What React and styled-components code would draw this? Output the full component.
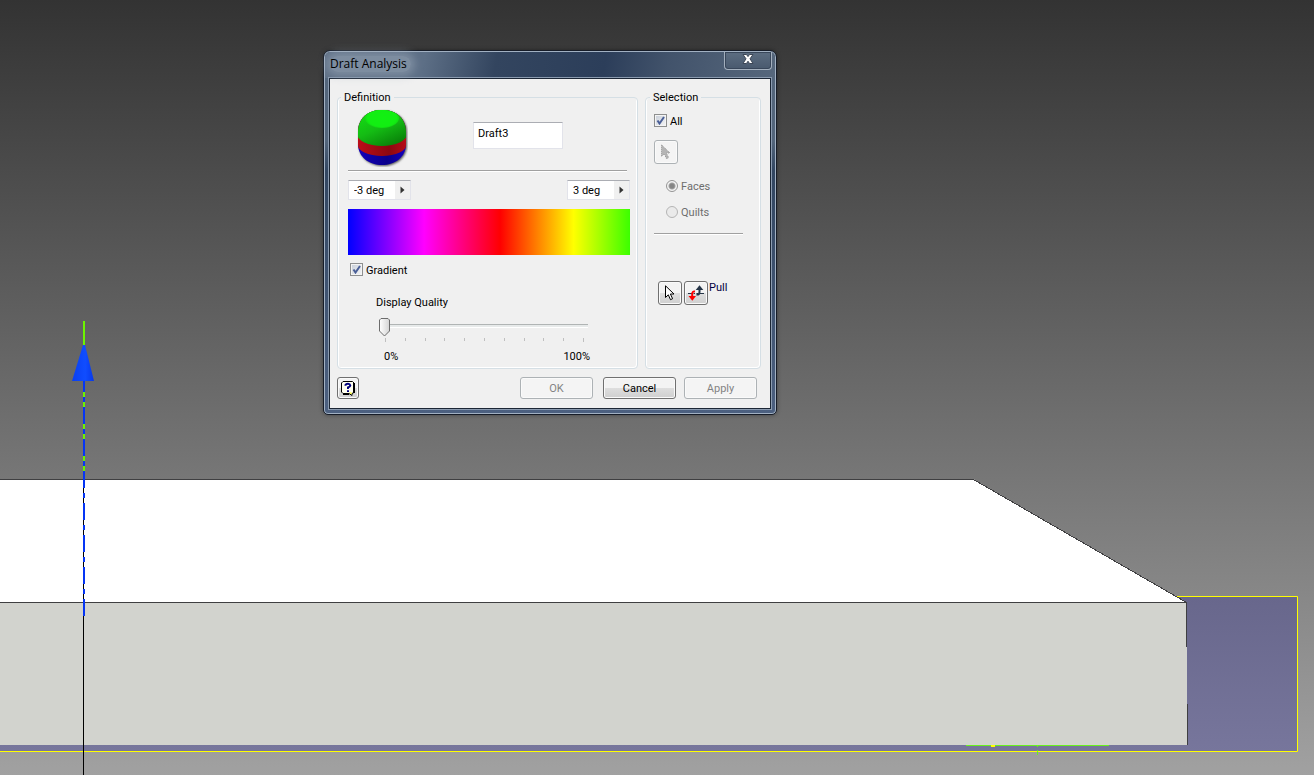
import React, { useState } from "react";
import styled, { createGlobalStyle } from "styled-components";

const uiFont = `"Tahoma", "Roboto", "Liberation Sans", sans-serif`;

const svgUrl = (w, h, body) =>
  `url("data:image/svg+xml,${encodeURIComponent(
    `<svg xmlns='http://www.w3.org/2000/svg' width='${w}' height='${h}' viewBox='0 0 ${w} ${h}'>${body}</svg>`
  )}")`;

const checkGlyph = svgUrl(
  11,
  11,
  `<path d='M2.5 5.5 L4.5 8.5 L9 2' fill='none' stroke='#4a5f97' stroke-width='2'/>`
);
const thumbGlyph = svgUrl(
  11,
  19,
  `<defs><linearGradient id='g'><stop offset='0' stop-color='#fff'/><stop offset='1' stop-color='#d4d4d4'/></linearGradient></defs><path d='M2 .5 H9 L10.5 2 V13 L5.5 18 L.5 13 V2 Z' fill='url(#g)' stroke='#6c6c6c'/>`
);

const GlobalStyle = createGlobalStyle`
  *, *::before, *::after { box-sizing: border-box; }
  body { margin: 0; background: #9f9f9f; font: 11px/16px ${uiFont}; color: #000; }
  button, input { font: inherit; color: inherit; }
`;

const Viewport = styled.main`
  position: relative;
  min-height: 100vh;
  overflow: hidden;
  background: linear-gradient(#333333, #a1a1a1);
`;

const Scene = styled.svg`
  display: block;
  width: 100%;
  height: 100vh;
`;

const Dialog = styled.section`
  position: absolute;
  left: 323px;
  top: 50px;
  width: 454px;
  padding: 0 5px 5px;
  border: 1px solid #161c28;
  border-radius: 7px 7px 5px 5px;
  background: linear-gradient(#53657b 0, #53657b 90px, #324661 120px, #4c6080 100%);
  box-shadow: inset 0 0 0 1px #a1b0c2, 0 0 4px rgba(0, 0, 0, 0.4);
`;

const TitleBar = styled.header`
  display: flex;
  justify-content: space-between;
  height: 26px;
  margin: 1px -4px 0;
  padding: 0 3px 0 5px;
  border-radius: 5px 5px 0 0;
  background: linear-gradient(100deg, #5f7086 0, #5d6f86 22%, #33455f 38%, #2c3e5a 62%, #42536b 76%, #56677c 100%);
`;

const Title = styled.h1`
  margin: 4px 0 0;
  padding: 0 4px 0 0;
  height: 16px;
  font: 12px/16px "Segoe UI", "Open Sans", sans-serif;
  color: #000;
  border-radius: 8px;
  background: rgba(165, 178, 193, 0.45);
  box-shadow: 0 0 8px 4px rgba(165, 178, 193, 0.45);
`;

const CloseButton = styled.button`
  display: flex;
  justify-content: center;
  width: 48px;
  height: 18px;
  padding: 2px 0 0;
  border: 1px solid #a3afbd;
  border-top: 0;
  border-radius: 0 0 4px 4px;
  background: linear-gradient(#5c6d81, #49596e);
  box-shadow: inset 0 0 0 1px #38465a;
`;

const Client = styled.div`
  border: 1px solid #1b2635;
  outline: 1px solid #8b9bb0;
  background: #f0f0f0;
  padding: 11px 9px 9px 7px;
`;

const Panels = styled.div`
  display: flex;
  gap: 7px;
  height: 279px;
`;

const Group = styled.fieldset`
  flex: ${(p) => (p.$grow ? "1" : "0 0 116px")};
  min-width: 0;
  margin: 0;
  padding: ${(p) => (p.$grow ? "0 7px 0 10px" : "0 7px")};
  border: 1px solid #d5dfe5;
  border-radius: 4px;
  box-shadow: inset -1px -1px 0 #fff, inset 1px 0 0 #fff;
`;

const Legend = styled.legend`
  margin-left: ${(p) => (p.$wide ? "-7px" : "-3px")};
  padding: 0 3px;
  height: 14px;
`;

const HeaderRow = styled.div`
  display: flex;
  align-items: center;
  gap: 65px;
  height: 66px;
  padding-left: 8px;
`;

const NameInput = styled.input`
  width: 90px;
  height: 27px;
  margin-bottom: 4px;
  padding: 0 4px 4px;
  border: 1px solid #e2e3ea;
  border-top-color: #abadb3;
  background: #fff;
`;

const Rule = styled.hr`
  width: ${(p) => p.$width};
  height: 2px;
  margin: 0;
  border: 0;
  border-top: 1px solid #a0a0a0;
  border-bottom: 1px solid #fff;
`;

const AngleRow = styled.div`
  display: flex;
  justify-content: space-between;
  margin: 8px 0 9px;
`;

const AngleBox = styled.div`
  display: flex;
  width: 63px;
  height: 20px;
  border: 1px solid #e2e3ea;
  border-top-color: #abadb3;
  background: #fff;
`;

const AngleInput = styled.input`
  flex: 1;
  min-width: 0;
  padding: 2px 0 0 5px;
  border: 0;
  background: transparent;
`;

const AngleMenu = styled.button`
  display: flex;
  align-items: center;
  justify-content: center;
  width: 15px;
  padding: 0;
  border: 0;
  background: #f0f0f0;
`;

const Spectrum = styled.div`
  height: 46px;
  background: linear-gradient(90deg, #00f, #f0f 27%, #f00 54%, #ff0 80%, #3cff00);
`;

const Choice = styled.label`
  display: flex;
  align-items: flex-start;
  gap: 3px;
  height: 14px;
  color: ${(p) => (p.$muted ? "#6d6d6d" : "#000")};
`;

const CheckBox = styled.input`
  appearance: none;
  width: 13px;
  height: 13px;
  margin: 0;
  border: 1px solid #8e8f8f;
  background: linear-gradient(135deg, #c6cdd8, #f6f6f6);
  box-shadow: inset 0 0 0 1px #f4f4f4;
  &:checked {
    background: ${checkGlyph} center no-repeat, linear-gradient(135deg, #c6cdd8, #f6f6f6);
  }
`;

const Radio = styled.input`
  appearance: none;
  width: 12px;
  height: 12px;
  margin: 1px 0 0;
  border: 1px solid #b4b4b4;
  border-radius: 50%;
  background: #eaeaea;
  &:checked {
    border-color: #949494;
    background: radial-gradient(circle, #858585 0 2px, #a2a2a2 3px, #f4f4f4 4px);
  }
`;

const GradientChoice = styled.div`
  padding: 8px 0 0 2px;
`;

const Quality = styled.div`
  display: flex;
  flex-direction: column;
  width: 214px;
  margin: 18px 0 0 28px;
`;

const Slider = styled.input`
  appearance: none;
  width: 209px;
  height: 19px;
  margin: 7px 0 0 3px;
  background: linear-gradient(#b0b4b4 0 1px, #e7eaea 1px 3px, #fff 3px 4px) 0 6px / 100% 4px no-repeat;
  &::-webkit-slider-thumb {
    appearance: none;
    width: 11px;
    height: 19px;
    background: ${thumbGlyph} no-repeat;
  }
`;

const Ticks = styled.div`
  display: flex;
  justify-content: space-between;
  width: 199px;
  height: 4px;
  margin: 1px 0 0 9px;
`;

const Tick = styled.span`
  width: 1px;
  height: ${(p) => (p.$end ? "4px" : "3px")};
  background: #bfbfbf;
`;

const Scale = styled.div`
  display: flex;
  justify-content: space-between;
  padding-left: 8px;
  margin-top: 7px;
`;

const ToolButton = styled.button`
  display: flex;
  align-items: center;
  justify-content: center;
  width: 24px;
  height: 24px;
  padding: 0;
  border: 1px solid #707070;
  border-radius: 3px;
  background: linear-gradient(#f3f3f3 0 48%, #dedede 52%, #cfcfcf);
  box-shadow: inset 0 0 0 1px #fafafa;
  &:disabled {
    border-color: #adb2b5;
    background: #f4f4f4;
  }
`;

const SelectionBody = styled.div`
  display: flex;
  flex-direction: column;
  align-items: flex-start;
  padding: 10px 0 0 1px;
`;

const FilterTool = styled.div`
  padding: 12px 0 15px;
`;

const FilterList = styled.div`
  display: flex;
  flex-direction: column;
  gap: 12px;
  padding: 0 0 14px 12px;
`;

const PullRow = styled.div`
  display: flex;
  gap: 2px;
  padding: 46px 0 0 4px;
  line-height: 14px;
  color: #000040;
`;

const PullLabel = styled.span`
  margin-left: -1px;
`;

const Footer = styled.footer`
  display: flex;
  gap: 8px;
  padding: 8px 4px 0 0;
`;

const HelpButton = styled(ToolButton)`
  width: 22px;
  height: 22px;
  margin-right: auto;
`;

const CommandButton = styled.button`
  width: 73px;
  height: 22px;
  margin-right: ${(p) => (p.$spaced ? "2px" : "0")};
  padding: 2px 0 0;
  border: 1px solid #707070;
  border-radius: 3px;
  background: linear-gradient(#f3f3f3 0 48%, #dedede 52%, #cfcfcf);
  box-shadow: inset 0 0 0 1px #fafafa;
  &:disabled {
    border-color: #adb2b5;
    background: #f4f4f4;
    color: #838383;
  }
`;

const Cursor = ({ muted }) => (
  <svg width="12" height="16" viewBox="0 0 12 16" aria-hidden="true">
    <path
      d="M1.5 .8V12.5L4.3 9.8L6.5 14.7L8.6 13.7L6.4 9H10Z"
      fill={muted ? "#b5b5b5" : "#fff"}
      stroke={muted ? "#9a9a9a" : "#000"}
      strokeDasharray={muted ? "1 1" : undefined}
    />
  </svg>
);

const FlipIcon = () => (
  <svg width="18" height="18" viewBox="0 0 18 18" aria-hidden="true">
    <path d="M1 9.5H5M6.5 9.5H8M9.5 9.5H11M13 9.5H17" stroke="#243447" />
    <path d="M8 7.5Q5.2 7 5.2 10V13" fill="none" stroke="red" strokeWidth="2" />
    <path d="M1.5 12H9L5.3 16.8Z" fill="red" />
    <path d="M9.5 10.5Q12.5 11 12.5 8V5" fill="none" stroke="#243447" strokeWidth="2" />
    <path d="M8.7 6H16.3L12.5 1.2Z" fill="#243447" />
  </svg>
);

const HelpIcon = () => (
  <svg width="16" height="16" viewBox="0 0 16 16" aria-hidden="true">
    <path d="M3 1.5H12.5L14 3V12.5L12 13.5V15.5L9 13.5H3L1.5 12V3Z" fill="#fffff0" stroke="#000" />
    <path d="M14 3V13M3 14H9" stroke="#000" strokeWidth="2" />
    <path d="M9 12.5H11.5V14.5Z" fill="#ff0" />
    <path d="M5.5 5.7V4.8Q6 3.7 8 3.7T10.3 5.4Q10.3 6.4 8 7.5V9M8 10.3V12" fill="none" stroke="#00007c" strokeWidth="2" />
  </svg>
);

const DraftIcon = () => (
  <svg width="52" height="59" viewBox="0 0 52 59" aria-hidden="true">
    <defs>
      <linearGradient id="cap" x1="0.2" y1="0" x2=".8" y2="1">
        <stop offset="0" stopColor="#13e213" />
        <stop offset=".5" stopColor="#14bc14" />
        <stop offset="1" stopColor="#087c08" />
      </linearGradient>
      <radialGradient id="shine">
        <stop offset="0" stopColor="#12f012" />
        <stop offset=".85" stopColor="#12ee12" />
        <stop offset="1" stopColor="#12dc12" />
      </radialGradient>
      <linearGradient id="band">
        <stop offset="0" stopColor="#bf0e18" />
        <stop offset=".65" stopColor="#8c0710" />
        <stop offset="1" stopColor="#b80d18" />
      </linearGradient>
      <linearGradient id="base">
        <stop offset="0" stopColor="#1400bf" />
        <stop offset=".6" stopColor="#09008a" />
        <stop offset="1" stopColor="#1800c4" />
      </linearGradient>
      <filter id="soft" x="-20%" y="-20%" width="140%" height="140%">
        <feGaussianBlur stdDeviation="1" />
      </filter>
      <clipPath id="pill">
        <path d="M2 24C2 10 12 2 26 2S50 10 50 24V36C50 49 39 57 26 57S2 49 2 36Z" />
      </clipPath>
    </defs>
    <path d="M3 25C3 11 13 3 27 3S51 11 51 25V37C51 50 40 58 27 58S3 50 3 37Z" fill="#555" filter="url(#soft)" />
    <g clipPath="url(#pill)">
      <rect width="52" height="59" fill="url(#base)" />
      <path d="M0 0H51V36A25 12 0 0 1 1 36L0 36Z" fill="url(#band)" />
      <path d="M0 0H51V26A25 12 0 0 1 1 26L0 26Z" fill="url(#cap)" />
      <ellipse cx="26" cy="10" rx="17" ry="10" fill="url(#shine)" />
    </g>
  </svg>
);

function Model() {
  return (
    <Scene viewBox="0 0 1314 775" preserveAspectRatio="xMinYMin slice" aria-label="Model view">
      <defs>
        <linearGradient id="plane" x1="0" y1="0" x2="0" y2="1">
          <stop offset="0" stopColor="#68678c" />
          <stop offset="1" stopColor="#77769c" />
        </linearGradient>
        <linearGradient id="arrow">
          <stop offset="0" stopColor="#0a3ff0" />
          <stop offset=".6" stopColor="#104dff" />
          <stop offset="1" stopColor="#0838e8" />
        </linearGradient>
      </defs>
      <path d="M0 597H1298V752H0Z" fill="url(#plane)" />
      <path d="M1170 596.5H1297.5V751.5H0" fill="none" stroke="#ff0" />
      <path d="M0 479H973L1186 602H0Z" fill="#fff" />
      <path d="M0 602H1187V745H0Z" fill="#d2d3ce" />
      <g shapeRendering="crispEdges">
        <path d="M0 479.5H973.5L1186.5 602.5" fill="none" stroke="#3f3f41" />
        <path d="M0 602.5H1186.5V647M1187.5 704V745" fill="none" stroke="#3f3f41" />
        <path d="M966 745.5H1109M1037.5 746V747M1037.5 750V755" stroke="#68f21c" />
        <path d="M991 746H995" stroke="#ff0" strokeWidth="2" />
        <path d="M83.5 480V775" stroke="#000" />
        <path d="M84 321V471" stroke="#6cf500" strokeWidth="2" />
        <path
          d="M84 381V392M84 397V402M84 407V424M84 429V434M84 439V456M84 461V466M84 471V488M84 493V498M84 503V520M84 525V530M84 535V552M84 557V562M84 567V584M84 589V594M84 599V616"
          stroke="#0535f5"
          strokeWidth="2"
        />
      </g>
      <path d="M83 345H85L94 381H72Z" fill="url(#arrow)" />
    </Scene>
  );
}

function Angle({ label, value }) {
  return (
    <AngleBox>
      <AngleInput aria-label={label} defaultValue={value} />
      <AngleMenu aria-label={`${label} options`}>
        <svg width="5" height="8" viewBox="0 0 5 8" aria-hidden="true">
          <path d="M.5 .5L4.5 4L.5 7.5Z" fill="#333" />
        </svg>
      </AngleMenu>
    </AngleBox>
  );
}

export default function App() {
  const [quality, setQuality] = useState(0);
  return (
    <Viewport>
      <GlobalStyle />
      <Model />
      <Dialog role="dialog" aria-labelledby="dialog-title">
        <TitleBar>
          <Title id="dialog-title">Draft Analysis</Title>
          <CloseButton aria-label="Close">
            <svg width="12" height="10" viewBox="0 0 12 10" aria-hidden="true">
              <path d="M1 .5H4.5L6 2.6L7.5 .5H11L8 4.8L11 9.5H7.5L6 7.2L4.5 9.5H1L4 4.8Z" fill="#fff" stroke="#3d4757" />
            </svg>
          </CloseButton>
        </TitleBar>
        <Client>
          <Panels>
            <Group $grow>
              <Legend $wide>Definition</Legend>
              <HeaderRow>
                <DraftIcon />
                <NameInput aria-label="Name" defaultValue="Draft3" />
              </HeaderRow>
              <Rule $width="279px" />
              <AngleRow>
                <Angle label="Minimum angle" value="-3 deg" />
                <Angle label="Maximum angle" value="3 deg" />
              </AngleRow>
              <Spectrum />
              <GradientChoice>
                <Choice>
                  <CheckBox type="checkbox" defaultChecked />
                  Gradient
                </Choice>
              </GradientChoice>
              <Quality>
                <label htmlFor="quality">Display Quality</label>
                <Slider
                  id="quality"
                  type="range"
                  min="0"
                  max="100"
                  value={quality}
                  onChange={(e) => setQuality(Number(e.target.value))}
                />
                <Ticks>
                  {Array.from({ length: 11 }, (_, i) => (
                    <Tick key={i} $end={i % 10 === 0} />
                  ))}
                </Ticks>
                <Scale>
                  <span>0%</span>
                  <span>100%</span>
                </Scale>
              </Quality>
            </Group>
            <Group>
              <Legend>Selection</Legend>
              <SelectionBody>
                <Choice>
                  <CheckBox type="checkbox" defaultChecked />
                  All
                </Choice>
                <FilterTool>
                  <ToolButton disabled aria-label="Select geometry">
                    <Cursor muted />
                  </ToolButton>
                </FilterTool>
                <FilterList>
                  <Choice $muted>
                    <Radio type="radio" name="filter" defaultChecked disabled />
                    Faces
                  </Choice>
                  <Choice $muted>
                    <Radio type="radio" name="filter" disabled />
                    Quilts
                  </Choice>
                </FilterList>
                <Rule $width="89px" />
                <PullRow>
                  <ToolButton aria-label="Select pull direction">
                    <Cursor />
                  </ToolButton>
                  <ToolButton aria-label="Flip pull direction">
                    <FlipIcon />
                  </ToolButton>
                  <PullLabel>Pull</PullLabel>
                </PullRow>
              </SelectionBody>
            </Group>
          </Panels>
          <Footer>
            <HelpButton aria-label="Help">
              <HelpIcon />
            </HelpButton>
            <CommandButton disabled $spaced>OK</CommandButton>
            <CommandButton>Cancel</CommandButton>
            <CommandButton disabled>Apply</CommandButton>
          </Footer>
        </Client>
      </Dialog>
    </Viewport>
  );
}
